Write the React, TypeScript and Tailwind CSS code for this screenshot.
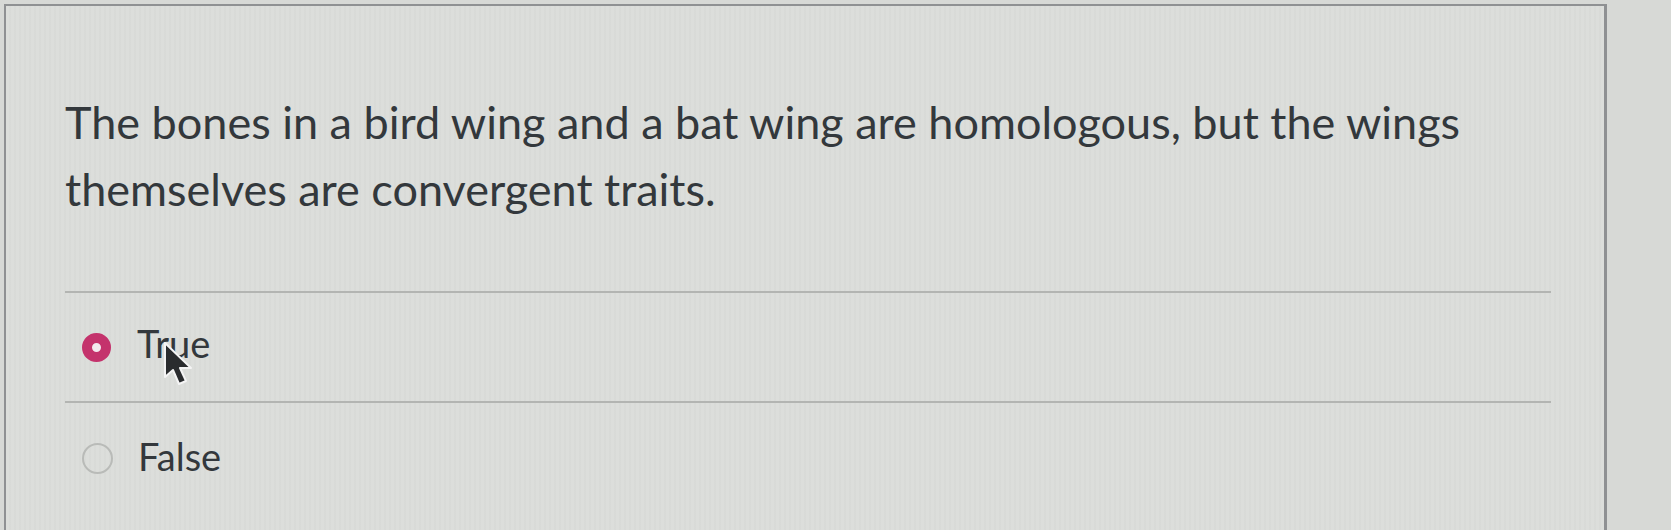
import React from "react";

function Cursor() {
  return (
    <svg
      className="absolute left-[161px] top-[341px]"
      width="36"
      height="48"
      viewBox="0 0 36 48"
    >
      <path
        d="M4 2 L4 36 L12 29 L18 43 L25 40 L19 27 L30 27 Z"
        fill="#2a2c2e"
        stroke="#f4f4f4"
        strokeWidth="2"
        strokeLinejoin="round"
      />
    </svg>
  );
}

export default function App() {
  return (
    <div className="relative w-[1671px] h-[530px] overflow-hidden bg-[#d7d9d6] font-['Lato','Liberation_Sans',sans-serif]">
      <div className="ml-[4px] mt-[4px] w-[1603px] h-[540px] border-t-2 border-l-2 border-r-[3px] border-[#8f9193] bg-[repeating-linear-gradient(90deg,#dcdedb_0px,#dcdedb_3px,#d5d7d4_4px,#dcdedb_5px)] pl-[59px] pr-[53px] pt-[83px]">
        <p className="text-[45px] leading-[67px] text-[#33383c]">
          The bones in a bird wing and a bat wing are homologous, but the wings
          <br />
          themselves are convergent traits.
        </p>
        <div className="mt-[68px] border-t-2 border-[#b3b5b2]">
          <div className="flex items-center h-[108px] pl-[17px]">
            <span className="w-[29px] h-[29px] rounded-full border-[10px] border-[#c4336c] bg-[#f3e9ee] shrink-0" />
            <span className="ml-[26px] text-[38px] text-[#33383c] pb-[8px]">True</span>
          </div>
          <div className="border-t-2 border-[#b3b5b2]">
            <div className="flex items-center h-[110px] pl-[17px]">
              <span className="w-[31px] h-[31px] rounded-full border-2 border-[#b9bbb8] shrink-0" />
              <span className="ml-[25px] text-[38px] text-[#33383c] pb-[4px]">False</span>
            </div>
          </div>
        </div>
      </div>
      <Cursor />
    </div>
  );
}
